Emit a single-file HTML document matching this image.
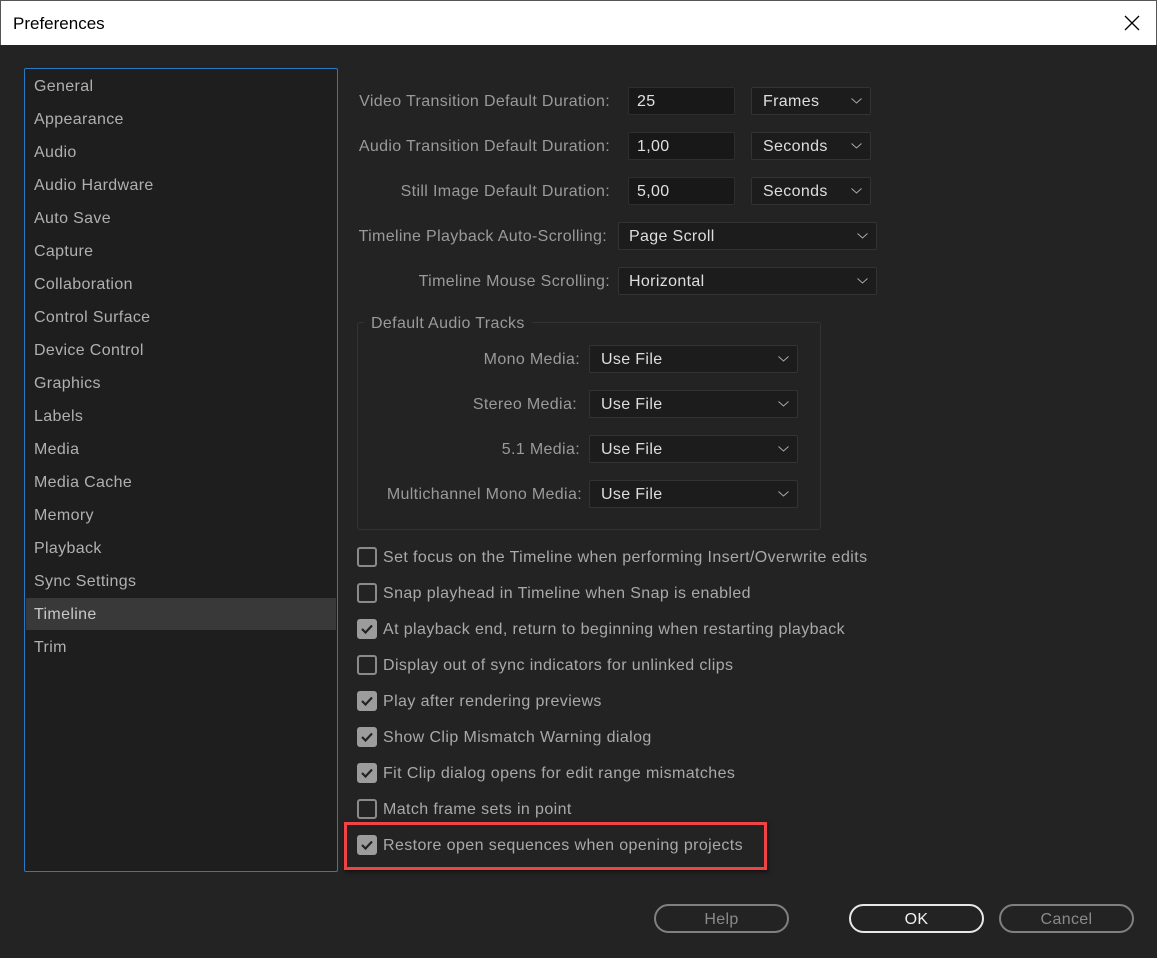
<!DOCTYPE html>
<html><head><meta charset="utf-8"><style>
*{margin:0;padding:0;box-sizing:border-box}
body{width:1157px;height:958px;background:#232323;font-family:"Liberation Sans",sans-serif;font-size:16px;position:relative;overflow:hidden;color:#a9a9a9;letter-spacing:0.35px}
.a{position:absolute}
#tb{left:0;top:0;width:1157px;height:45px;background:#fff;border:1px solid #555;border-bottom:none;color:#000;letter-spacing:0}
#tb span{position:absolute;left:12px;top:13px;font-size:17px}
#side{left:24px;top:68px;width:314px;height:804px;background:#1e1e1e;border:1px solid #2a78c8;border-radius:2px}
.it{position:absolute;left:9px;font-size:16px;color:#b0b0b0;line-height:20px;margin-top:1px}
#sel{left:1px;top:529px;width:310px;height:32px;background:#393939}
.lb{position:absolute;text-align:right;font-size:16px;color:#9a9a9a;line-height:20px;margin-top:1px}
.in{position:absolute;background:#181818;border:1px solid #2e2e2e;border-radius:2px;color:#e0e0e0;padding-left:8px;font-size:16px;padding-top:1px}
.dd{position:absolute;background:#1c1c1c;border:1px solid #333;border-radius:2px;color:#dedede;padding-left:11px;font-size:16px;padding-top:1px}
.dd svg{position:absolute;right:8px;top:50%;margin-top:-3px}
.cb{position:absolute;left:357px;width:20px;height:20px;border:2px solid #8a8a8a;border-radius:3px}
.cb.on{background:#9c9c9c;border-color:#9c9c9c}
.cb.on svg{position:absolute;left:2px;top:3px}
.ct{position:absolute;left:383px;font-size:16px;color:#a9a9a9;line-height:20px;margin-top:1px;letter-spacing:0.4px}
.bt{position:absolute;top:904px;width:135px;height:29px;border:2px solid #808080;border-radius:15px;text-align:center;line-height:27px;color:#8a8a8a;font-size:16px}
</style></head><body>
<div class="a" id="tb"><span>Preferences</span>
<svg class="a" style="left:1123px;top:14px" width="16" height="16"><path d="M1 1L15 15M15 1L1 15" stroke="#000" stroke-width="1.3"/></svg></div>
<div class="a" id="side">
<div class="a" id="sel"></div>
<div class="it" style="top:7px">General</div>
<div class="it" style="top:40px">Appearance</div>
<div class="it" style="top:73px">Audio</div>
<div class="it" style="top:106px">Audio Hardware</div>
<div class="it" style="top:139px">Auto Save</div>
<div class="it" style="top:172px">Capture</div>
<div class="it" style="top:205px">Collaboration</div>
<div class="it" style="top:238px">Control Surface</div>
<div class="it" style="top:271px">Device Control</div>
<div class="it" style="top:304px">Graphics</div>
<div class="it" style="top:337px">Labels</div>
<div class="it" style="top:370px">Media</div>
<div class="it" style="top:403px">Media Cache</div>
<div class="it" style="top:436px">Memory</div>
<div class="it" style="top:469px">Playback</div>
<div class="it" style="top:502px">Sync Settings</div>
<div class="it" style="top:535px;color:#c8c8c8">Timeline</div>
<div class="it" style="top:568px">Trim</div>
</div>

<div class="lb" style="left:330px;width:280px;top:91px">Video Transition Default Duration:</div>
<div class="in" style="left:628px;top:87px;width:107px;height:28px;line-height:26px">25</div>
<div class="dd" style="left:751px;top:87px;width:120px;height:28px;line-height:26px">Frames<svg width="11" height="6"><path d="M0.5 0.5L5.5 5L10.5 0.5" stroke="#aaa" fill="none"/></svg></div>
<div class="lb" style="left:330px;width:280px;top:136px">Audio Transition Default Duration:</div>
<div class="in" style="left:628px;top:132px;width:107px;height:28px;line-height:26px">1,00</div>
<div class="dd" style="left:751px;top:132px;width:120px;height:28px;line-height:26px">Seconds<svg width="11" height="6"><path d="M0.5 0.5L5.5 5L10.5 0.5" stroke="#aaa" fill="none"/></svg></div>
<div class="lb" style="left:330px;width:280px;top:181px">Still Image Default Duration:</div>
<div class="in" style="left:628px;top:177px;width:107px;height:28px;line-height:26px">5,00</div>
<div class="dd" style="left:751px;top:177px;width:120px;height:28px;line-height:26px">Seconds<svg width="11" height="6"><path d="M0.5 0.5L5.5 5L10.5 0.5" stroke="#aaa" fill="none"/></svg></div>
<div class="lb" style="left:320px;width:287px;top:226px">Timeline Playback Auto-Scrolling:</div>
<div class="dd" style="left:618px;top:222px;width:259px;height:28px;line-height:26px;padding-left:10px">Page Scroll<svg width="11" height="6"><path d="M0.5 0.5L5.5 5L10.5 0.5" stroke="#aaa" fill="none"/></svg></div>
<div class="lb" style="left:320px;width:290px;top:271px">Timeline Mouse Scrolling:</div>
<div class="dd" style="left:618px;top:267px;width:259px;height:28px;line-height:26px;padding-left:10px">Horizontal<svg width="11" height="6"><path d="M0.5 0.5L5.5 5L10.5 0.5" stroke="#aaa" fill="none"/></svg></div>

<div class="a" style="left:357px;top:322px;width:464px;height:208px;border:1px solid #333;border-radius:3px"></div>
<div class="a" style="left:364px;top:313px;padding:0 7px;background:#232323;line-height:22px;color:#9a9a9a">Default Audio Tracks</div>
<div class="lb" style="left:360px;width:220px;top:349px">Mono Media:</div>
<div class="dd" style="left:589px;top:345px;width:209px;height:28px;line-height:26px">Use File<svg width="11" height="6"><path d="M0.5 0.5L5.5 5L10.5 0.5" stroke="#aaa" fill="none"/></svg></div>
<div class="lb" style="left:360px;width:217px;top:394px">Stereo Media:</div>
<div class="dd" style="left:589px;top:390px;width:209px;height:28px;line-height:26px">Use File<svg width="11" height="6"><path d="M0.5 0.5L5.5 5L10.5 0.5" stroke="#aaa" fill="none"/></svg></div>
<div class="lb" style="left:360px;width:220px;top:439px">5.1 Media:</div>
<div class="dd" style="left:589px;top:435px;width:209px;height:28px;line-height:26px">Use File<svg width="11" height="6"><path d="M0.5 0.5L5.5 5L10.5 0.5" stroke="#aaa" fill="none"/></svg></div>
<div class="lb" style="left:360px;width:222px;top:484px">Multichannel Mono Media:</div>
<div class="dd" style="left:589px;top:480px;width:209px;height:28px;line-height:26px">Use File<svg width="11" height="6"><path d="M0.5 0.5L5.5 5L10.5 0.5" stroke="#aaa" fill="none"/></svg></div>

<div class="cb" style="top:547px"></div><div class="ct" style="top:547px">Set focus on the Timeline when performing Insert/Overwrite edits</div>
<div class="cb" style="top:583px"></div><div class="ct" style="top:583px">Snap playhead in Timeline when Snap is enabled</div>
<div class="cb on" style="top:619px"><svg width="12" height="10"><path d="M1 5L4.5 8.5L11 1.5" stroke="#222" stroke-width="2.2" fill="none"/></svg></div><div class="ct" style="top:619px">At playback end, return to beginning when restarting playback</div>
<div class="cb" style="top:655px"></div><div class="ct" style="top:655px">Display out of sync indicators for unlinked clips</div>
<div class="cb on" style="top:691px"><svg width="12" height="10"><path d="M1 5L4.5 8.5L11 1.5" stroke="#222" stroke-width="2.2" fill="none"/></svg></div><div class="ct" style="top:691px">Play after rendering previews</div>
<div class="cb on" style="top:727px"><svg width="12" height="10"><path d="M1 5L4.5 8.5L11 1.5" stroke="#222" stroke-width="2.2" fill="none"/></svg></div><div class="ct" style="top:727px">Show Clip Mismatch Warning dialog</div>
<div class="cb on" style="top:763px"><svg width="12" height="10"><path d="M1 5L4.5 8.5L11 1.5" stroke="#222" stroke-width="2.2" fill="none"/></svg></div><div class="ct" style="top:763px">Fit Clip dialog opens for edit range mismatches</div>
<div class="cb" style="top:799px"></div><div class="ct" style="top:799px">Match frame sets in point</div>
<div class="a" style="left:344px;top:822px;width:423px;height:48px;border:3px solid #f04444;box-shadow:1px 2px 4px rgba(0,0,0,.5)"></div>
<div class="cb on" style="top:835px"><svg width="12" height="10"><path d="M1 5L4.5 8.5L11 1.5" stroke="#222" stroke-width="2.2" fill="none"/></svg></div><div class="ct" style="top:835px">Restore open sequences when opening projects</div>

<div class="bt" style="left:654px">Help</div>
<div class="bt" style="left:849px;border-color:#e8e8e8;color:#f0f0f0">OK</div>
<div class="bt" style="left:999px">Cancel</div>
</body></html>
